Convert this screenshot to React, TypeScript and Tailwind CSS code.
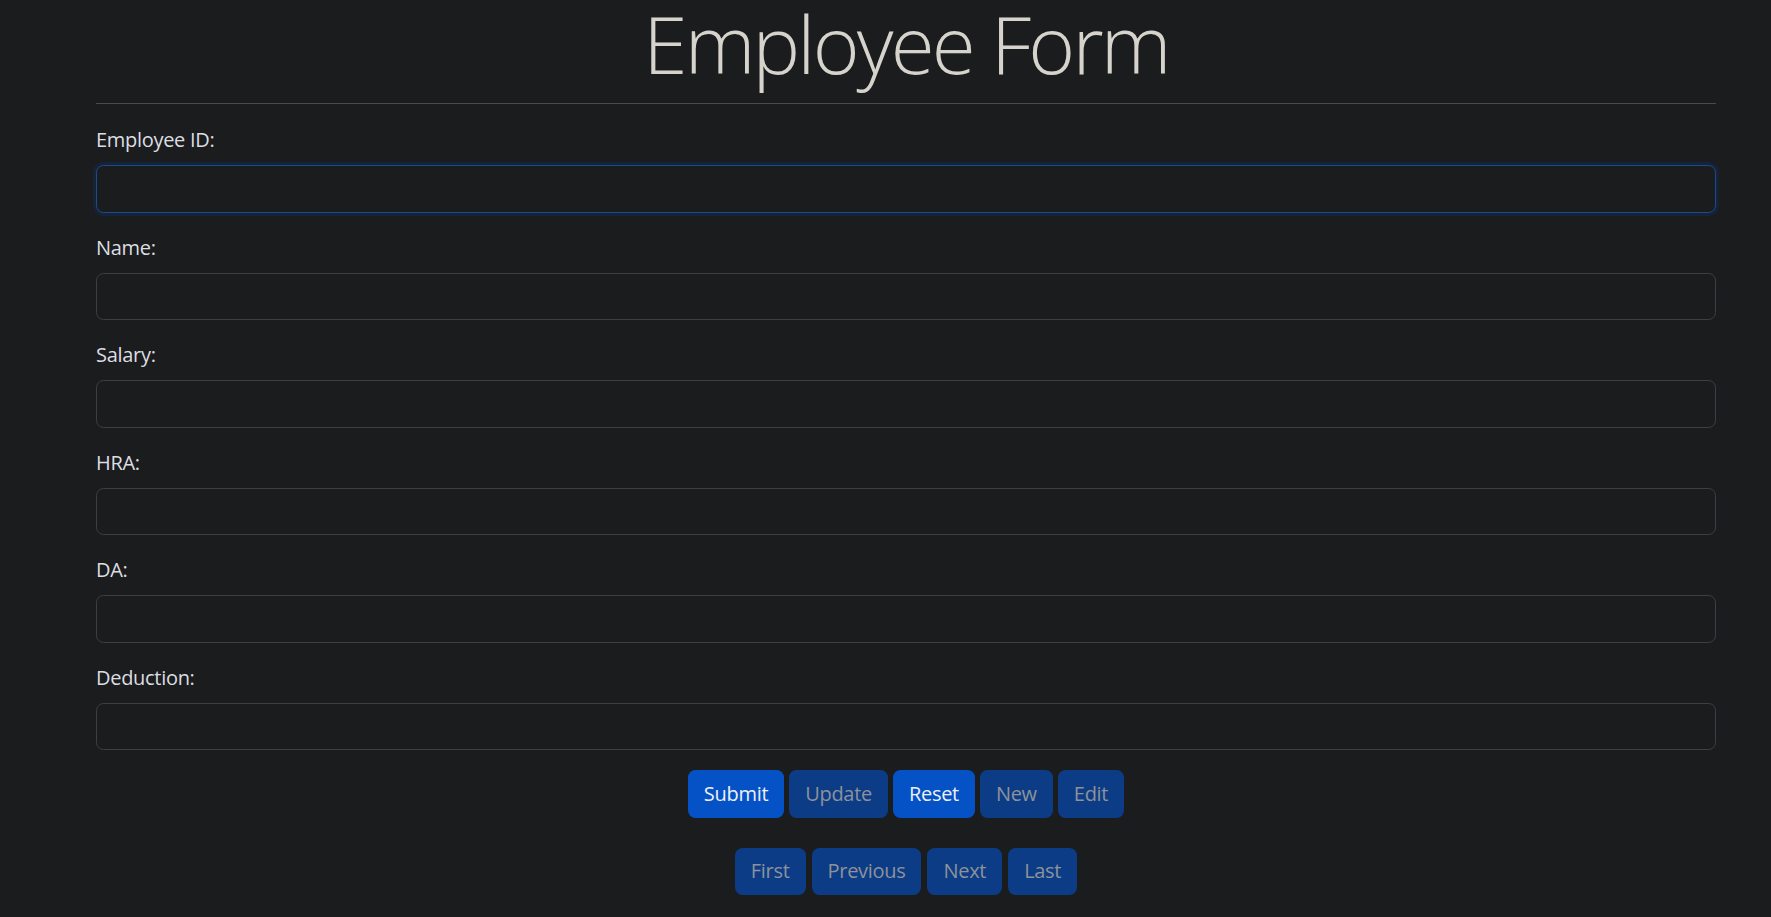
import React, { useState } from "react";

type Employee = {
  id: string;
  name: string;
  salary: string;
  hra: string;
  da: string;
  deduction: string;
};

const fields: { key: keyof Employee; label: string }[] = [
  { key: "id", label: "Employee ID:" },
  { key: "name", label: "Name:" },
  { key: "salary", label: "Salary:" },
  { key: "hra", label: "HRA:" },
  { key: "da", label: "DA:" },
  { key: "deduction", label: "Deduction:" },
];

const btnBase =
  "h-[47.5px] px-[15px] rounded-[7.5px] text-[20px] leading-[30px] tracking-[-0.3px] border border-transparent";
const btnOn = btnBase + " bg-[#0552c7] text-[#eef0f4]";
const btnOff = btnBase + " bg-[#0c3c85] text-[#8d929b] cursor-default";

const App: React.FC = () => {
  const [emp, setEmp] = useState<Employee>({
    id: "",
    name: "",
    salary: "",
    hra: "",
    da: "",
    deduction: "",
  });

  const handleChange = (e: React.ChangeEvent<HTMLInputElement>) => {
    const { name, value } = e.target;
    setEmp({ ...emp, [name]: value });
  };

  return (
    <div
      className="min-h-screen bg-[#1b1c1e] text-[#dcdee2]"
      style={{ fontFamily: '"Open Sans", "Noto Sans", sans-serif' }}
    >
      <div className="pl-[96px] w-[1716px]">
        <h1 className="m-0 pt-[1px] text-center text-[80px] leading-[84px] tracking-[-2.8px] font-light text-[#d6d3cd]">
          Employee Form
        </h1>
        <hr className="mt-[18px] mb-[21px] border-0 border-t border-[#4a4b4e]" />

        <form onSubmit={(e) => e.preventDefault()}>
          {fields.map((f, i) => (
            <div key={f.key} className="mb-[20px]">
              <label className="block mb-[10px] text-[20px] leading-[30px] tracking-[-0.3px]">
                {f.label}
              </label>
              <input
                type="text"
                name={f.key}
                value={emp[f.key]}
                onChange={handleChange}
                className={
                  "block w-full h-[47.5px] rounded-[7.5px] bg-[#1b1c1e] px-[15px] text-[20px] outline-none border " +
                  (i === 0
                    ? "border-[#1f4a8c] shadow-[0_0_0_3px_rgba(12,50,110,0.35)]"
                    : "border-[#3d3f43]")
                }
              />
            </div>
          ))}

          <div className="flex justify-center gap-[5px]">
            <button type="submit" className={btnOn}>Submit</button>
            <button type="button" disabled className={btnOff}>Update</button>
            <button type="reset" className={btnOn}>Reset</button>
            <button type="button" disabled className={btnOff}>New</button>
            <button type="button" disabled className={btnOff}>Edit</button>
          </div>

          <div className="flex justify-center gap-[6px] mt-[30px]">
            <button type="button" disabled className={btnOff}>First</button>
            <button type="button" disabled className={btnOff}>Previous</button>
            <button type="button" disabled className={btnOff}>Next</button>
            <button type="button" disabled className={btnOff}>Last</button>
          </div>
        </form>
      </div>
    </div>
  );
};

export default App;
